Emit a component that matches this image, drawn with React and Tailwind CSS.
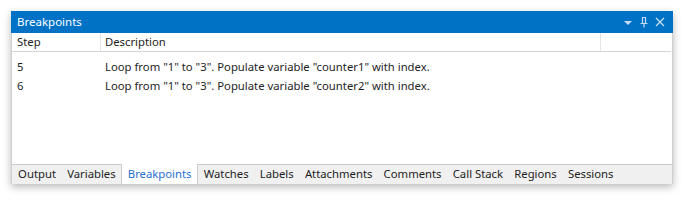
import React from 'react';

const rows = [
  { step: '5', text: 'Loop from "1" to "3". Populate variable "counter1" with index.' },
  { step: '6', text: 'Loop from "1" to "3". Populate variable "counter2" with index.' },
];

const tabs = ['Output', 'Variables', 'Breakpoints', 'Watches', 'Labels', 'Attachments', 'Comments', 'Call Stack', 'Regions', 'Sessions'];

const App = () => {
  return (
    <div className="w-[690px] h-[201px] bg-white pt-[11px] pl-[11px]" style={{ fontFamily: '"Noto Sans", "Open Sans", sans-serif' }}>
      <div className="w-[662px] h-[173px] flex flex-col bg-white border-l border-r border-[#cfcfcf] shadow-[0_3px_8px_rgba(0,0,0,0.28)]">
        {/* Title bar */}
        <div className="h-[22px] bg-[#0072c6] flex items-center justify-between pl-[6px] pr-[8px] -mx-px">
          <span className="text-white text-[11.5px]">Breakpoints</span>
          <div className="flex items-center gap-[6px] text-[#c6dcf2]">
            <svg width="10" height="10" viewBox="0 0 10 10">
              <path d="M1 4h8L5 8z" fill="currentColor" />
            </svg>
            <svg width="10" height="12" viewBox="0 0 10 12">
              <path d="M3 1.5h4M3.5 1.5v6M6.5 1.5v6M1.5 7.5h7M5 7.5v4" stroke="currentColor" strokeWidth="1.2" fill="none" />
            </svg>
            <svg width="10" height="10" viewBox="0 0 10 10">
              <path d="M1 1l8 8M9 1l-8 8" stroke="currentColor" strokeWidth="1.3" />
            </svg>
          </div>
        </div>

        {/* Header */}
        <div className="h-[19px] flex text-[11.3px] text-[#1e1e1e] border-b border-[#d6d6d6] mr-px">
          <div className="w-[89px] pl-[5px] border-r border-[#e3e3e3] flex items-center">Step</div>
          <div className="w-[500px] pl-[4px] border-r border-[#e3e3e3] flex items-center">Description</div>
          <div className="flex-1" />
        </div>

        {/* Rows */}
        <div className="flex-1 pt-[6px]">
          {rows.map((r) => (
            <div key={r.step} className="h-[19px] flex items-center text-[11.3px] text-[#1e1e1e]">
              <div className="w-[89px] pl-[5px]">{r.step}</div>
              <div className="pl-[4px]">{r.text}</div>
            </div>
          ))}
        </div>

        {/* Tabs */}
        <div className="h-[20px] bg-[#f0f0f0] border-t border-[#cccccc] flex text-[11.3px] text-[#1e1e1e] pl-[0.5px]">
          {tabs.map((t) => (
            <div
              key={t}
              className={
                t === 'Breakpoints'
                  ? 'px-[5.6px] -mt-px h-[20px] bg-white border-l border-r border-[#cccccc] text-[#1f6fd0] flex items-center'
                  : 'px-[5.6px] flex items-center'
              }
            >
              {t}
            </div>
          ))}
        </div>
      </div>
    </div>
  );
};

export default App;
